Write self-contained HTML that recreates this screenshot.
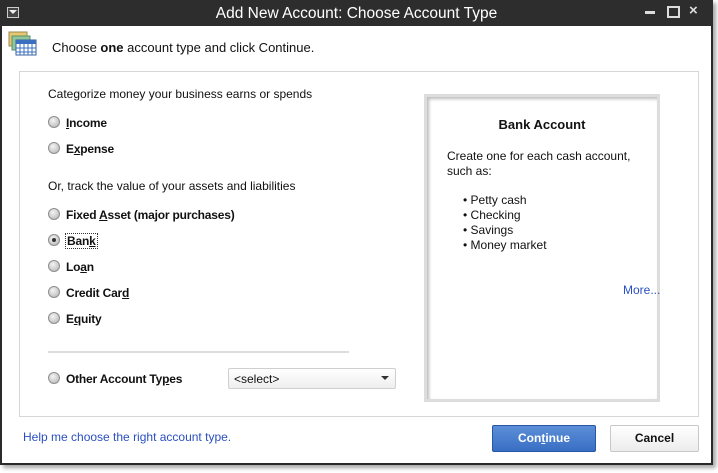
<!DOCTYPE html><html><head><style>
body{margin:0;width:718px;height:473px;background:#fff;font-family:"Liberation Sans",sans-serif;position:relative;overflow:hidden}
.a{position:absolute}
.win{left:0;top:0;width:709px;height:463px;border:2px solid #2a2a2a;border-top:none;background:#fff;box-shadow:3px 3px 4px rgba(0,0,0,.35)}
.tb{left:0;top:0;width:713px;height:26px;background:#2d2d2d;color:#fff;font-size:16px}
.r{position:absolute;width:12px;height:12px;border-radius:50%;background:radial-gradient(circle at 40% 35%,#f4f4f4,#b0b0b0);border:1px solid #8e8e8e;box-sizing:border-box}
.lb{position:absolute;font-size:12px;font-weight:bold;color:#111;letter-spacing:-.2px}
.t{position:absolute;font-size:12px;color:#111}
u{text-decoration:underline}
</style></head><body>
<div class="a win"></div>
<div class="a tb"></div>
<div class="a" style="left:7px;top:7px;width:10px;height:9px;border:1px solid #ccc;background:#444"></div>
<div class="a" style="left:9px;top:10px;width:0;height:0;border-left:4px solid transparent;border-right:4px solid transparent;border-top:4px solid #eee"></div>
<div class="a" style="left:0;width:713px;top:5px;text-align:center;color:#fff;font-size:15.5px">Add New Account: Choose Account Type</div>
<div class="a" style="left:645px;top:11px;width:10px;height:3px;background:#ddd"></div>
<div class="a" style="left:667px;top:6px;width:9px;height:8px;border:2px solid #ddd"></div>
<div class="a" style="left:689px;top:2px;color:#ddd;font-size:15px;font-weight:bold">×</div>
<svg class="a" style="left:8px;top:31px" width="30" height="26"><rect x="1" y="1" width="18" height="14" fill="#e8c770" stroke="#9a8a50"/><rect x="4" y="5" width="18" height="14" fill="#8fc79a" stroke="#5e8f6a"/><rect x="8" y="9" width="20" height="15" fill="#fff" stroke="#3a5fa0"/><rect x="8" y="9" width="20" height="4" fill="#3a6fc0"/><path d="M12 13v11M16 13v11M20 13v11M24 13v11M8 17h20M8 21h20" stroke="#3a6fc0" stroke-width="1"/></svg>
<div class="a" style="left:52px;top:40px;font-size:13px;color:#111">Choose <b>one</b> account type and click Continue.</div>
<div class="a" style="left:19px;top:71px;width:678px;height:344px;border:1px solid #d6d6d6"></div>
<div class="t" style="left:48px;top:87px">Categorize money your business earns or spends</div>
<div class="r" style="left:48px;top:116px"></div><div class="lb" style="left:66px;top:116px"><u>I</u>ncome</div>
<div class="r" style="left:48px;top:142px"></div><div class="lb" style="left:66px;top:142px">E<u>x</u>pense</div>
<div class="t" style="left:48px;top:179px">Or, track the value of your assets and liabilities</div>
<div class="r" style="left:48px;top:208px"></div><div class="lb" style="left:66px;top:208px">Fixed <u>A</u>sset (major purchases)</div>
<div class="r" style="left:48px;top:234px"></div><div class="a" style="left:52px;top:238px;width:4px;height:4px;border-radius:50%;background:#333"></div>
<div class="lb" style="left:65px;top:233px;border:1px dotted #333;padding:0 1px">Ban<u>k</u></div>
<div class="r" style="left:48px;top:260px"></div><div class="lb" style="left:66px;top:260px">Lo<u>a</u>n</div>
<div class="r" style="left:48px;top:286px"></div><div class="lb" style="left:66px;top:286px">Credit Car<u>d</u></div>
<div class="r" style="left:48px;top:312px"></div><div class="lb" style="left:66px;top:312px">E<u>q</u>uity</div>
<div class="a" style="left:48px;top:351px;width:301px;height:2px;background:#ddd"></div>
<div class="r" style="left:48px;top:372px"></div><div class="lb" style="left:66px;top:372px">Other Account Ty<u>p</u>es</div>
<div class="a" style="left:228px;top:368px;width:168px;height:21px;border:1px solid #cfcfcf;border-radius:2px;background:linear-gradient(#fff,#eee);font-size:12px;color:#111;box-sizing:border-box;padding:3px 5px">&lt;select&gt;</div>
<div class="a" style="left:381px;top:376px;border-left:4px solid transparent;border-right:4px solid transparent;border-top:4px solid #333"></div>
<div class="a" style="left:424px;top:94px;width:236px;height:308px;box-sizing:border-box;border:3px solid #ddd;box-shadow:inset 2px 2px 3px #bbb"></div>
<div class="a" style="left:424px;top:117px;width:236px;text-align:center;font-size:13px;font-weight:bold;color:#111">Bank Account</div>
<div class="t" style="left:447px;top:149px;line-height:15px">Create one for each cash account,<br>such as:</div>
<div class="t" style="left:463px;top:193px;line-height:15px">• Petty cash<br>• Checking<br>• Savings<br>• Money market</div>
<div class="a" style="left:623px;top:283px;font-size:12px;color:#2a4fc0">More...</div>
<div class="a" style="left:23px;top:430px;font-size:12px;color:#2a4fc0">Help me choose the right account type.</div>
<div class="a" style="left:492px;top:425px;width:104px;height:27px;box-sizing:border-box;border:1px solid #2a56a8;border-radius:2px;background:linear-gradient(#5b8fd8,#3a6ec4);color:#fff;font-size:12px;font-weight:bold;text-align:center;line-height:25px">Con<u>t</u>inue</div>
<div class="a" style="left:610px;top:425px;width:89px;height:27px;box-sizing:border-box;border:1px solid #c8c8c8;border-radius:2px;background:linear-gradient(#fff,#ececec);color:#111;font-size:12px;font-weight:bold;text-align:center;line-height:25px">Cancel</div>
</body></html>
